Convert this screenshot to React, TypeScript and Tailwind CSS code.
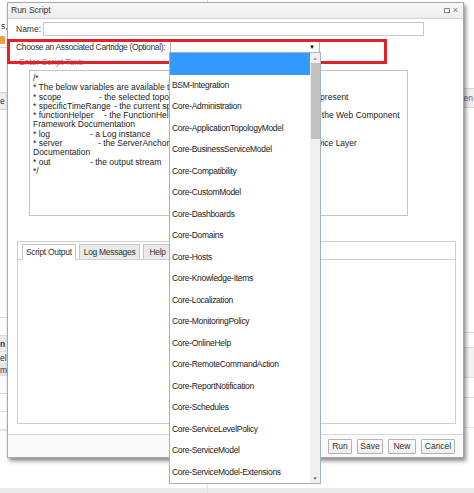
import React from "react";

const cartridges = [
  "",
  "BSM-Integration",
  "Core-Administration",
  "Core-ApplicationTopologyModel",
  "Core-BusinessServiceModel",
  "Core-Compatibility",
  "Core-CustomModel",
  "Core-Dashboards",
  "Core-Domains",
  "Core-Hosts",
  "Core-Knowledge-Items",
  "Core-Localization",
  "Core-MonitoringPolicy",
  "Core-OnlineHelp",
  "Core-RemoteCommandAction",
  "Core-ReportNotification",
  "Core-Schedules",
  "Core-ServiceLevelPolicy",
  "Core-ServiceModel",
  "Core-ServiceModel-Extensions",
];

// name column width, rest of the comment line
const scriptLines: { name?: string; w?: string; text: string }[] = [
  { text: "/*" },
  { text: "* The below variables are available to scripts at run time:" },
  { name: "* scope", w: "w-[66px]", text: "- the selected topology object, or null if nothing is currently present" },
  { name: "* specificTimeRange", w: "w-[81px]", text: "- the current specific time range" },
  { name: "* functionHelper", w: "w-[71px]", text: "- the FunctionHelper instance; for further information, see the Web Component" },
  { text: "Framework Documentation" },
  { name: "* log", w: "w-[57px]", text: "- a Log instance" },
  { name: "* server", w: "w-[65px]", text: "- the ServerAnchor instance; for more details, view the Service Layer" },
  { text: "Documentation" },
  { name: "* out", w: "w-[57px]", text: "- the output stream" },
  { text: "*/" },
];

const Btn: React.FC<{ label: string; w: string }> = ({ label, w }) => (
  <button
    className={`${w} h-[15px] border border-[#b3b3b3] bg-gradient-to-b from-white to-[#ececec] text-[8.5px] text-[#333] leading-none rounded-[1px]`}
  >
    {label}
  </button>
);

export default function App() {
  return (
    <div
      className="relative w-[474px] h-[493px] overflow-hidden bg-white text-[#333]"
      style={{ fontFamily: '"Liberation Sans", Arial, sans-serif' }}
    >
      {/* page behind the dialog */}
      <div className="flex h-full">
        <div className="w-[208px] flex flex-col border-r border-[#e2e2e2]">
          <div className="h-[20px]" />
          <div className="h-[12px] text-[8.5px] leading-[12px] pl-[1px]">s,</div>
          <div className="h-[16px] flex items-center border-b border-[#d8d8d8]">
            <span className="w-[5px] h-[8px] bg-[#e8a33c] rounded-[1px]" />
          </div>
          <div className="h-[44px]" />
          <div className="h-[18px] bg-[#eeeeee] border-y border-[#d4d4d4] text-[8.5px] leading-[16px]">e</div>
          <div className="h-[190px]" />
          <div className="h-[18px] border-b border-[#dedede]" />
          <div className="h-[18px] border-b border-[#dedede]" />
          <div className="h-[16px] bg-[#ececec] border-b border-[#dedede] text-[8.5px] font-bold leading-[16px]">n</div>
          <div className="h-[12px] bg-[#eef3f8] border-b border-[#dedede] text-[8.5px] leading-[12px]">el</div>
          <div className="h-[12px] bg-[#e6e6e6] border-b border-[#dedede] text-[8.5px] leading-[12px]">m</div>
          <div className="h-[18px] border-b border-[#dedede]" />
          <div className="h-[18px] border-b border-[#dedede]" />
          <div className="h-[18px] border-b border-[#e6e6e6]" />
          <div className="flex-1 border-t border-[#e6e6e6]" />
          <div className="h-[5px] bg-[#eaeaea]" />
        </div>
        <div className="flex-1 flex flex-col">
          <div className="h-[88px]" />
          <div className="h-[20px] bg-[#f0f0f0] border-y border-[#d6d6d6] text-[8.5px] leading-[18px] flex justify-end pr-[1px] text-[#4a6a8a]">
            en
          </div>
          <div className="h-[210px]" />
          <div className="h-[15px] border-b border-[#dedede]" />
          <div className="h-[15px] border-b border-[#dedede]" />
          <div className="h-[30px] bg-[#f3f3f3] border-b border-[#dedede]" />
          <div className="h-[20px] border-b border-[#dedede]" />
          <div className="h-[30px] border-b border-[#e6e6e6]" />
          <div className="flex-1" />
          <div className="h-[5px] bg-[#eaeaea]" />
        </div>
      </div>

      {/* dialog */}
      <div className="absolute left-[7px] top-[2px] w-[457px] h-[456px] bg-white border border-[#a8a8a8] shadow-[2px_3px_4px_rgba(0,0,0,0.45)] flex flex-col">
        <div className="h-[16px] bg-gradient-to-b from-[#f8f8f8] to-[#ededed] border-b border-[#d0d0d0] flex items-center justify-between px-[3px] text-[8.5px]">
          <span>Run Script</span>
          <span className="flex items-center gap-[3px] pr-[2px] text-[#777]">
            <span className="w-[6px] h-[5px] border border-[#888]" />
            <span className="text-[9px] leading-none">×</span>
          </span>
        </div>

        <div className="flex-1 flex flex-col px-[8px]">
          <div className="mt-[3px] h-[14px] flex items-center text-[8.5px]">
            <span className="w-[27px]">Name:</span>
            <div className="w-[381px] h-[14px] border border-[#c8c8c8] bg-white" />
          </div>

          <div className="mt-[5px] h-[12px] flex items-center text-[8.5px]">
            <span className="w-[154px] shrink-0 whitespace-nowrap tracking-[-0.35px]">
              Choose an Associated Cartridge (Optional):
            </span>
            <div className="w-[150px] h-[12px] border border-[#a9b7c6] bg-white flex items-center justify-end pr-[4px]">
              <span className="text-[6px] text-black">▼</span>
            </div>
          </div>

          <div className="mt-[4px] pl-[3px] text-[8.5px] text-[#888] h-[10px] leading-[10px]">Enter Script Text:</div>

          <div className="mt-[3px] ml-[13px] w-[379px] h-[146px] border border-[#c4c4c4] pt-[3px] pl-[3px] text-[8.5px] leading-[9.3px] text-[#222] overflow-hidden">
            {scriptLines.map((l, i) => (
              <div key={i} className="whitespace-nowrap">
                {l.name && <span className={`inline-block ${l.w}`}>{l.name}</span>}
                {l.text}
              </div>
            ))}
          </div>

          <div className="mt-[25px] ml-[1px] w-[439px] h-[183px] border border-[#cfcfcf] flex flex-col">
            <div className="h-[18px] flex items-end gap-[3px] pl-[4px] border-b border-[#cfcfcf] text-[8.5px] tracking-[-0.3px]">
              <div className="h-[16px] px-[3px] border border-b-0 border-[#c6c6c6] bg-white leading-[15px] -mb-px">
                Script Output
              </div>
              <div className="h-[15px] px-[4px] border border-b-0 border-[#c6c6c6] bg-[#eaeaea] leading-[14px]">
                Log Messages
              </div>
              <div className="h-[15px] px-[5px] border border-b-0 border-[#c6c6c6] bg-[#eaeaea] leading-[14px]">
                Help
              </div>
            </div>
            <div className="flex-1" />
          </div>
        </div>

        <div className="mt-[8px] h-[23px] border-t border-[#dcdcdc] bg-[#fafafa] flex items-center justify-end gap-[5px] pr-[8px]">
          <Btn label="Run" w="w-[24px]" />
          <Btn label="Save" w="w-[26px]" />
          <Btn label="New" w="w-[28px]" />
          <Btn label="Cancel" w="w-[34px]" />
        </div>
      </div>

      {/* annotation box */}
      <div className="absolute left-[7px] top-[39px] w-[380px] h-[25px] border-[3px] border-[#e1222b]" />

      {/* open dropdown list */}
      <div className="absolute left-[169px] top-[52px] w-[152px] h-[432px] bg-white border border-[#9fb3c8] flex text-[8.5px] text-[#222]">
        <div className="flex-1 flex flex-col">
          {cartridges.map((c, i) => (
            <div
              key={i}
              className={`h-[21.5px] shrink-0 flex items-center pl-[2px] whitespace-nowrap tracking-[-0.3px] ${
                i === 0 ? "bg-[#3399ff]" : ""
              }`}
            >
              {c}
            </div>
          ))}
        </div>
        <div className="w-[10px] bg-[#f0f0f0] flex flex-col items-center">
          <span className="text-[5px] text-[#999] leading-[10px]">▲</span>
          <div className="w-[9px] h-[76px] bg-[#c2c2c2]" />
          <div className="flex-1" />
          <span className="text-[5px] text-[#666] leading-[10px]">▼</span>
        </div>
      </div>
    </div>
  );
}
